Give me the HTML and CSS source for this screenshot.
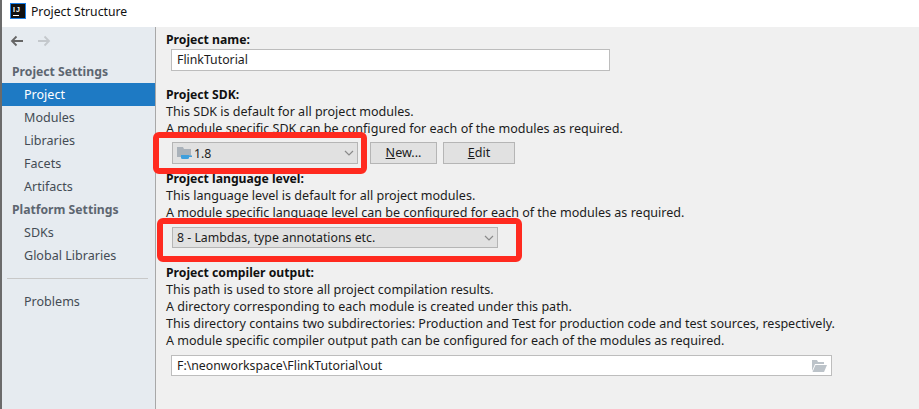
FILE: index.html
```html
<!doctype html>
<html>
<head>
<meta charset="utf-8">
<title>Project Structure</title>
<link rel="stylesheet" href="styles.css">
</head>

<body>
    <div class="window">
        <div class="title-bar">
            <div class="logo"><span class="logo-text">IJ</span><span class="logo-line"></span></div>
            <span class="title">Project Structure</span>
        </div>
        <div class="main">
            <div class="sidebar">
                <div class="arrows">
                    <svg width="14" height="12" viewBox="0 0 14 12"><path d="M13 6H2M6.500 1.500L2 6l4.500 4.500" fill="none" stroke="#666" stroke-width="1.800"/></svg>
                    <svg width="14" height="12" viewBox="0 0 14 12"><path d="M1 6h11M7.500 1.500L12 6l-4.500 4.500" fill="none" stroke="#c4c8cc" stroke-width="1.800"/></svg>
                </div>
                <div class="side-head">Project Settings</div>
                <div class="side-item active">Project</div>
                <div class="side-item">Modules</div>
                <div class="side-item">Libraries</div>
                <div class="side-item">Facets</div>
                <div class="side-item">Artifacts</div>
                <div class="side-head">Platform Settings</div>
                <div class="side-item">SDKs</div>
                <div class="side-item">Global Libraries</div>
                <div class="side-line"></div>
                <div class="side-item">Problems</div>
            </div>
            <div class="content">
                <div class="label">Project name:</div>
                <div class="field name-field">FlinkTutorial</div>

                <div class="label sdk-label">Project SDK:</div>
                <p>This SDK is default for all project modules.</p>
                <p>A module specific SDK can be configured for each of the modules as required.</p>
                <div class="sdk-row">
                    <div class="combo sdk-combo">
                        <svg width="15" height="14" viewBox="0 0 15 14"><path d="M0 1h6l1 2h7v8H0z" fill="#aab2ba"/><path d="M4 9h8v2.500q0 1.500-1.500 1.500h-5Q4 13 4 11.500z" fill="#3f9fdc"/><path d="M12 9.500h3V11h-3z" fill="#3f9fdc"/></svg>
                        <span>1.8</span>
                        <svg class="chev" width="10" height="6" viewBox="0 0 10 6"><path d="M1 1l4 4 4-4" fill="none" stroke="#8a8a8a" stroke-width="1.200"/></svg>
                    </div>
                    <div class="btn new-btn"><u>N</u>ew...</div>
                    <div class="btn edit-btn"><u>E</u>dit</div>
                </div>

                <div class="label lang-label">Project language level:</div>
                <p>This language level is default for all project modules.</p>
                <p>A module specific language level can be configured for each of the modules as required.</p>
                <div class="combo lang-combo">
                    <span>8 - Lambdas, type annotations etc.</span>
                    <svg class="chev" width="10" height="6" viewBox="0 0 10 6"><path d="M1 1l4 4 4-4" fill="none" stroke="#8a8a8a" stroke-width="1.200"/></svg>
                </div>

                <div class="label out-label">Project compiler output:</div>
                <p>This path is used to store all project compilation results.</p>
                <p>A directory corresponding to each module is created under this path.</p>
                <p>This directory contains two subdirectories: Production and Test for production code and test sources, respectively.</p>
                <p>A module specific compiler output path can be configured for each of the modules as required.</p>
                <div class="field out-field">
                    <span>F:\neonworkspace\FlinkTutorial\out</span>
                    <svg width="15" height="12" viewBox="0 0 15 12"><path d="M0 0h5l1 2h6v2H3L0 11z" fill="#bcc3c9"/><path d="M3.500 5H15l-3 7H0.500z" fill="#bcc3c9"/></svg>
                </div>
            </div>
        </div>
    </div>
    <div class="red-box box-sdk"></div>
    <div class="red-box box-lang"></div>
</body>
</html>
```

FILE: styles.css
```css
*{
    padding: 0px;
    margin: 0px;
    box-sizing: border-box;
}
html,body{
    height: 100%;
    overflow: hidden;
}
body{
    position: relative;
    font-family: "Noto Sans", sans-serif;
    font-size: 12.55px;
    color: #1c1c1c;
    background-color: #f0f0f0;
}
.window{
    height: 409px;
    display: flex;
    flex-direction: column;
    border-left: 2px solid #6b6b6b;
}
.title-bar{
    height: 27px;
    background-color: white;
    display: flex;
    align-items: flex-start;
    padding: 3px 0px 0px 8px;
    gap: 5px;
}
.logo{
    width: 16px;
    height: 16px;
    background-color: #111;
    border: 1px solid #1a7fe8;
    color: white;
    font-family: "Liberation Sans", sans-serif;
    font-size: 7px;
    font-weight: bold;
    letter-spacing: 1px;
    line-height: 7px;
    padding: 2px 0px 0px 2px;
}
.logo-text{
    display: block;
}
.logo-line{
    display: block;
    width: 6px;
    height: 1px;
    background-color: white;
    margin-top: 2px;
}
.title{
    font-size: 12.2px;
    line-height: 18px;
    color: #111;
}
.main{
    flex: 1;
    display: flex;
}
.sidebar{
    width: 154px;
    background-color: #e6ebf0;
    border-right: 1px solid #a8a8a8;
}
.arrows{
    height: 33px;
    padding: 8px 0px 0px 8px;
    display: flex;
    gap: 13px;
}
.side-head{
    height: 23px;
    line-height: 23px;
    padding-left: 10px;
    font-size: 12.2px;
    font-weight: bold;
    color: #5d6670;
}
.side-item{
    height: 23px;
    line-height: 23px;
    padding-left: 22px;
    color: #444b54;
}
.side-item.active{
    background-color: #1e7ac4;
    color: white;
}
.side-line{
    height: 1px;
    background-color: #c8c8c8;
    margin: 11px 7px 11px 5px;
}
.content{
    flex: 1;
    padding: 4px 0px 0px 10px;
}
.content p{
    height: 17px;
    line-height: 17px;
    white-space: nowrap;
}
.label{
    height: 17px;
    line-height: 17px;
    font-size: 12.2px;
    font-weight: bold;
    color: #111;
}
.field{
    background-color: white;
    border: 1px solid #bdbdbd;
    font-size: 12.3px;
    line-height: 19px;
    margin-left: 5px;
    padding-left: 5px;
}
.name-field{
    width: 439px;
    height: 22px;
    line-height: 20px;
    margin-top: 1px;
}
.sdk-label{
    margin-top: 15px;
}
.sdk-row{
    display: flex;
    margin-top: 5px;
    margin-left: 6px;
}
.combo{
    display: flex;
    align-items: center;
    background-color: #e1e1e1;
    border: 1px solid #b5b5b5;
    font-size: 12.3px;
    position: relative;
}
.chev{
    position: absolute;
    right: 3px;
    top: 7px;
}
.sdk-combo{
    width: 186px;
    height: 22px;
    padding-left: 4px;
    gap: 2px;
}
.btn{
    height: 22px;
    line-height: 20px;
    text-align: center;
    background-color: #e1e1e1;
    border: 1px solid #b5b5b5;
}
.new-btn{
    width: 67px;
    margin-left: 12px;
}
.edit-btn{
    width: 72px;
    margin-left: 6px;
}
.lang-label{
    margin-top: 6px;
}
.lang-combo{
    width: 326px;
    height: 21px;
    margin-top: 6px;
    margin-left: 6px;
    padding-left: 4px;
}
.out-label{
    margin-top: 16px;
}
.out-field{
    width: 661px;
    height: 21px;
    margin-top: 6px;
    display: flex;
    align-items: center;
    justify-content: space-between;
    padding-right: 4px;
}
.red-box{
    position: absolute;
    border: 6px solid #ff2a1f;
    border-radius: 6px;
}
.box-sdk{
    left: 153px;
    top: 132px;
    width: 214px;
    height: 42px;
}
.box-lang{
    left: 157px;
    top: 218px;
    width: 365px;
    height: 44px;
}
```
